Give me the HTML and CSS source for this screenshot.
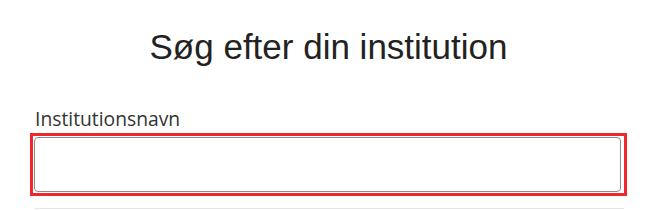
FILE: index.html
```html
<!DOCTYPE html>
<html lang="da">
<head>
  <meta charset="UTF-8" />
  <meta name="viewport" content="width=device-width, initial-scale=1.0"/>
  <title>Søg efter din institution</title>
<link rel="stylesheet" href="styles.css">
</head>
<body>
  <main class="search-panel">
    <h1>Søg efter din institution</h1>

    <form class="search-form">
      <label for="institution">Institutionsnavn</label>
      <div class="field-frame">
        <input type="text" id="institution" autocomplete="off" />
      </div>
    </form>

    <div class="divider"></div>
  </main>
</body>
</html>
```

FILE: styles.css
```css
* {
  box-sizing: border-box;
}

body {
  margin: 0;
  background: #fff;
  font-family: 'Liberation Sans', Arial, sans-serif;
  color: #222;
}

.search-panel {
  padding: 0 29px 0 30px;
}

.search-panel h1 {
  margin: 0;
  padding-top: 27px;
  height: 106px;
  font-size: 35px;
  font-weight: normal;
  text-align: center;
  color: #222;
}

.search-form label {
  display: block;
  font-family: 'Open Sans', sans-serif;
  font-size: 19.3px;
  line-height: 26px;
  color: #333;
  padding-left: 5px;
  height: 27px;
}

.field-frame {
  border: 3px solid #f0262b;
  padding: 1px 3px 1px 1px;
}

.field-frame input {
  display: block;
  width: 100%;
  height: 55px;
  border: 1.5px solid #8c8c8c;
  border-radius: 4px;
  background: #fff;
  font-size: 16px;
  outline: none;
}

.divider {
  margin: 12px 3px 0 4px;
  border-top: 1px solid #e6e6e6;
}
```
